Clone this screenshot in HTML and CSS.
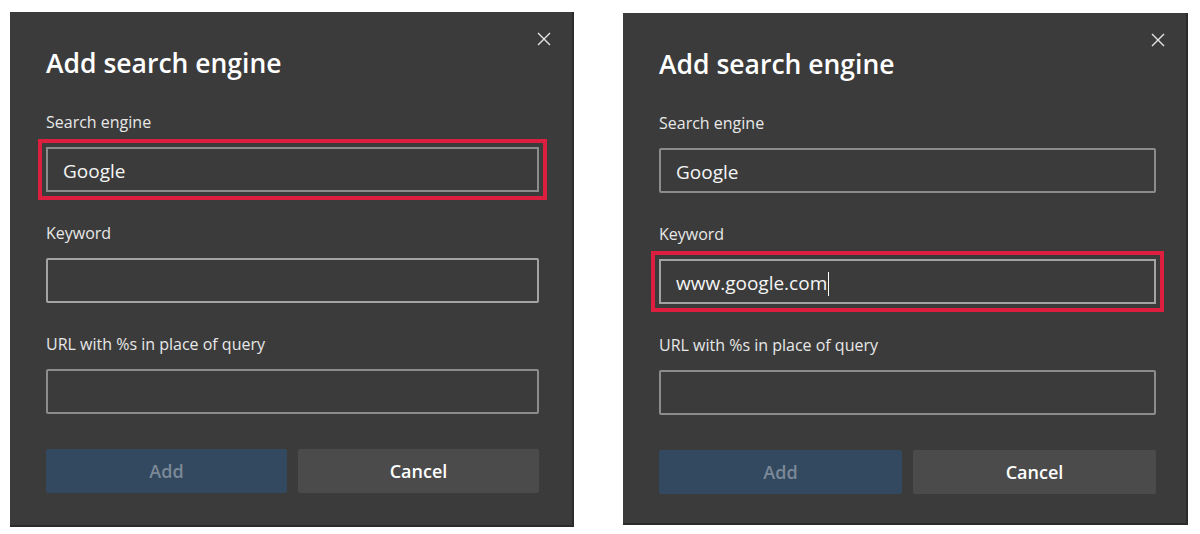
FILE: index.html
```html
<!DOCTYPE html>
<html>
  <head>
    <meta charset="UTF-8" />
    <title>Add search engine</title>
    <link rel="stylesheet" href="styles.css">
  </head>

  <body>
    <div class="steps">

      <!-- step 1: name filled in -->
      <div class="dialog">
        <button class="close" type="button">
          <svg width="14" height="14" viewBox="0 0 14 14"><path d="M1 1L13 13M13 1L1 13" /></svg>
        </button>
        <h1>Add search engine</h1>

        <div class="field">
          <label>Search engine</label>
          <div class="input marked">Google</div>
        </div>
        <div class="field">
          <label>Keyword</label>
          <div class="input active"></div>
        </div>
        <div class="field">
          <label>URL with %s in place of query</label>
          <div class="input"></div>
        </div>

        <div class="actions">
          <button class="btn btn-add" type="button">Add</button>
          <button class="btn btn-cancel" type="button">Cancel</button>
        </div>
      </div>

      <!-- step 2: keyword typed -->
      <div class="dialog second">
        <button class="close" type="button">
          <svg width="14" height="14" viewBox="0 0 14 14"><path d="M1 1L13 13M13 1L1 13" /></svg>
        </button>
        <h1>Add search engine</h1>

        <div class="field">
          <label>Search engine</label>
          <div class="input">Google</div>
        </div>
        <div class="field">
          <label>Keyword</label>
          <div class="input active marked">www.google.com<span class="caret"></span></div>
        </div>
        <div class="field">
          <label>URL with %s in place of query</label>
          <div class="input"></div>
        </div>

        <div class="actions">
          <button class="btn btn-add" type="button">Add</button>
          <button class="btn btn-cancel" type="button">Cancel</button>
        </div>
      </div>

    </div>
  </body>
</html>
```

FILE: styles.css
```css
body {
  margin: 0;
  background-color: #ffffff;
  font-family: "Open Sans", "Noto Sans", Arial, sans-serif;
}

.steps {
  display: flex;
  gap: 49px;
  padding: 12px 0 0 10px;
}

.dialog {
  position: relative;
  box-sizing: border-box;
  width: 564px;
  height: 515px;
  padding: 33px 33px 0 36px;
  background-color: #3b3b3b;
  border-right: 2px solid #2b2b2b;
  border-bottom: 2px solid #2b2b2b;
  color: #f2f2f2;
}

.dialog.second {
  width: 565px;
  height: 512px;
  margin-top: 1px;
  padding-right: 30px;
}

.close {
  position: absolute;
  top: 20px;
  right: 21px;
  padding: 0;
  border: none;
  background: none;
  cursor: pointer;
}

.close svg {
  display: block;
}

.close path {
  stroke: #e6e6e6;
  stroke-width: 1.4;
}

h1 {
  margin: 0 0 31px 0;
  font-size: 26.5px;
  line-height: 36px;
  font-weight: 600;
  color: #ffffff;
}

.field {
  margin-bottom: 31px;
}

label {
  display: block;
  margin-bottom: 15px;
  font-size: 16px;
  line-height: 20px;
  color: #e8e8e8;
}

.input {
  box-sizing: border-box;
  height: 45px;
  padding: 0 15px;
  border: 2px solid #8c8c8c;
  border-radius: 2px;
  font-size: 19px;
  line-height: 44px;
  color: #f5f5f5;
}

.input.active {
  border-color: #a3a3a3;
}

/* red highlight round the field being edited */
.input.marked {
  border-radius: 0;
  outline: 4px solid #dc1f3f;
  outline-offset: 4px;
}

.caret {
  display: inline-block;
  width: 1px;
  height: 24px;
  margin-left: 1px;
  vertical-align: -6px;
  background-color: #ffffff;
}

.actions {
  display: flex;
  gap: 11px;
  margin-top: 35px;
}

.btn {
  flex: 1;
  height: 44px;
  border: none;
  border-radius: 2px;
  font-family: "Open Sans", "Noto Sans", Arial, sans-serif;
  font-size: 18px;
  font-weight: 600;
  cursor: pointer;
}

.btn-add {
  background-color: #33495f;
  color: #7b8898;
}

.btn-cancel {
  background-color: #4b4b4b;
  color: #ffffff;
}
```
